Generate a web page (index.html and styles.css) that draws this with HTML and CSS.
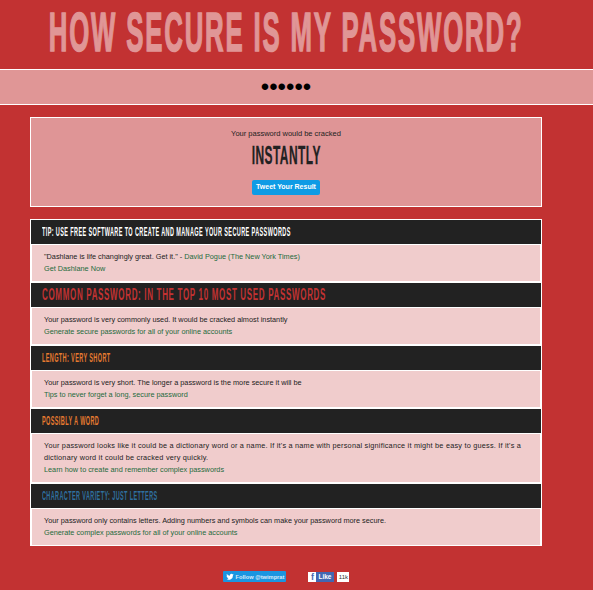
FILE: index.html
```html
<!DOCTYPE html>
<html lang="en">
<head>
  <meta charset="UTF-8">
  <meta name="viewport" content="width=device-width, initial-scale=1.0">
  <title>How Secure Is My Password?</title>
  <link rel="stylesheet" href="styles.css">
</head>
<body>
  <header class="title-wrap">
    <h1 class="title"><span class="squeeze">HOW SECURE IS MY PASSWORD?</span></h1>
  </header>
  <div class="password-band">••••••</div>
  <main class="content">
    <section class="result">
      <p class="result-lead">Your password would be cracked</p>
      <h2 class="result-time"><span class="squeeze">INSTANTLY</span></h2>
      <a class="tweet-btn">Tweet Your Result</a>
    </section>
    <section class="checks">
      <div class="check">
        <h3 class="check-head tip"><span class="squeeze">TIP: USE FREE SOFTWARE TO CREATE AND MANAGE YOUR SECURE PASSWORDS</span></h3>
        <div class="check-body">
          <p>"Dashlane is life changingly great. Get it." - <a>David Pogue (The New York Times)</a></p>
          <p><a>Get Dashlane Now</a></p>
        </div>
      </div>
      <div class="check">
        <h3 class="check-head common"><span class="squeeze">COMMON PASSWORD: IN THE TOP 10 MOST USED PASSWORDS</span></h3>
        <div class="check-body">
          <p>Your password is very commonly used. It would be cracked almost instantly</p>
          <p><a>Generate secure passwords for all of your online accounts</a></p>
        </div>
      </div>
      <div class="check">
        <h3 class="check-head warn"><span class="squeeze">LENGTH: VERY SHORT</span></h3>
        <div class="check-body">
          <p>Your password is very short. The longer a password is the more secure it will be</p>
          <p><a>Tips to never forget a long, secure password</a></p>
        </div>
      </div>
      <div class="check">
        <h3 class="check-head warn"><span class="squeeze">POSSIBLY A WORD</span></h3>
        <div class="check-body">
          <p class="wide">Your password looks like it could be a dictionary word or a name. If it's a name with personal significance it might be easy to guess. If it's a dictionary word it could be cracked very quickly.</p>
          <p><a>Learn how to create and remember complex passwords</a></p>
        </div>
      </div>
      <div class="check">
        <h3 class="check-head info"><span class="squeeze">CHARACTER VARIETY: JUST LETTERS</span></h3>
        <div class="check-body">
          <p>Your password only contains letters. Adding numbers and symbols can make your password more secure.</p>
          <p><a>Generate complex passwords for all of your online accounts</a></p>
        </div>
      </div>
    </section>
  </main>
  <footer class="social">
    <a class="follow-btn">
      <svg class="bird" viewBox="0 0 24 24"><path fill="#fff" d="M23 4.6c-.8.4-1.7.6-2.6.7.9-.6 1.7-1.4 2-2.5-.9.5-1.9.9-2.9 1.1A4.5 4.5 0 0 0 11.8 8 12.9 12.9 0 0 1 2.5 3.2a4.5 4.5 0 0 0 1.4 6.1c-.7 0-1.4-.2-2-.6 0 2.2 1.5 4.1 3.6 4.5-.7.2-1.4.2-2 .1.6 1.8 2.3 3.1 4.2 3.2A9.1 9.1 0 0 1 1 18.3 12.9 12.9 0 0 0 21 6.9c.8-.6 1.5-1.400 2-2.300z"/></svg>
      Follow @twimprat
    </a>
    <span class="like">
      <a class="like-btn"><span class="fb-f">f</span>Like</a>
      <span class="like-count">11k</span>
    </span>
  </footer>
</body>
</html>
```

FILE: styles.css
```css
html,
body {
  height: 100%;
}

body {
  margin: 0;
  background: #c23232;
  font: 7.3px/12px "Liberation Sans", Arial, sans-serif;
  color: #222;
  overflow: hidden;
}

h1,
h2,
h3,
p {
  margin: 0;
}

.squeeze {
  display: inline-block;
  white-space: nowrap;
}

.title-wrap {
  height: 69px;
  padding-right: 21px;
  overflow: hidden;
}

.title {
  display: flex;
  justify-content: center;
  font: bold 56px/64px "Liberation Sans Narrow", "Liberation Sans", sans-serif;
  letter-spacing: 4px;
  color: #e09696;
}

.title .squeeze {
  transform: scaleX(0.46);
  -webkit-text-stroke: 1.6px #e09696;
}

.password-band {
  height: 34px;
  padding-right: 21px;
  background: #e09696;
  border-top: 1px solid #fff;
  border-bottom: 1px solid #fff;
  font-size: 24px;
  line-height: 34px;
  text-align: center;
  color: #000;
}

.content {
  width: 512px;
  margin: 12px 0 0 30px;
}

.result {
  height: 88px;
  border: 1px solid #fff;
  background: #df9596;
  text-align: center;
}

.result-lead {
  padding-top: 10px;
  font-size: 7.5px;
}

.result-time {
  display: flex;
  justify-content: center;
  font: bold 26px/30px "Liberation Sans Narrow", "Liberation Sans", sans-serif;
  letter-spacing: 1px;
  color: #222;
}

.result-time .squeeze {
  transform: scaleX(0.46);
  -webkit-text-stroke: 0.3px #222;
}

.tweet-btn {
  display: inline-block;
  margin-top: 10px;
  padding: 0 4.5px;
  height: 15px;
  line-height: 14px;
  background: #0e9be5;
  border-radius: 2px;
  font-weight: bold;
  font-size: 7px;
  color: #fff;
}

.checks {
  margin-top: 12px;
  border: 1px solid #fff;
  background: #fff;
  display: flex;
  flex-direction: column;
  gap: 2px;
}

.check-head {
  height: 24px;
  padding-left: 11px;
  background: #222;
  font: bold 12px/24px "Liberation Sans Narrow", "Liberation Sans", sans-serif;
  letter-spacing: 0.83px;
}

.check-head .squeeze {
  transform-origin: left center;
  transform: scaleX(0.46);
}

.tip {
  color: #fff;
}

.common {
  font-size: 16px;
  letter-spacing: 1.34px;
  color: #c23232;
}

.check-head.common .squeeze {
  transform: scaleX(0.5);
}

.warn {
  color: #e67a30;
}

.info {
  color: #2f6f9f;
}

.check-body {
  margin: 1px 1px 0;
  padding: 6px 12px;
  background: #f0cccc;
}

.check-body a {
  color: #1d6b3c;
}

.wide {
  letter-spacing: 0.22px;
}

.social {
  display: flex;
  justify-content: center;
  align-items: center;
  gap: 22px;
  width: 572px;
  margin-top: 25px;
}

.follow-btn {
  display: flex;
  align-items: center;
  gap: 2px;
  height: 11px;
  padding: 0 2px 0 3px;
  background: #1b95e0;
  border-radius: 1px;
  font-size: 5.7px;
  font-weight: bold;
  color: #dcecf8;
}

.bird {
  width: 8px;
  height: 8px;
}

.like {
  display: flex;
  align-items: center;
  gap: 3px;
}

.like-btn {
  display: flex;
  align-items: center;
  height: 10px;
  padding-right: 3px;
  background: #4267b2;
  font-size: 6.5px;
  font-weight: bold;
  color: #fff;
}

.fb-f {
  width: 8px;
  margin-right: 2px;
  background: #fff;
  color: #4267b2;
  font-size: 9px;
  line-height: 10px;
  text-align: center;
}

.like-count {
  width: 12px;
  height: 10px;
  background: #fff;
  font-size: 6px;
  line-height: 10px;
  text-align: center;
  color: #333;
}
```
